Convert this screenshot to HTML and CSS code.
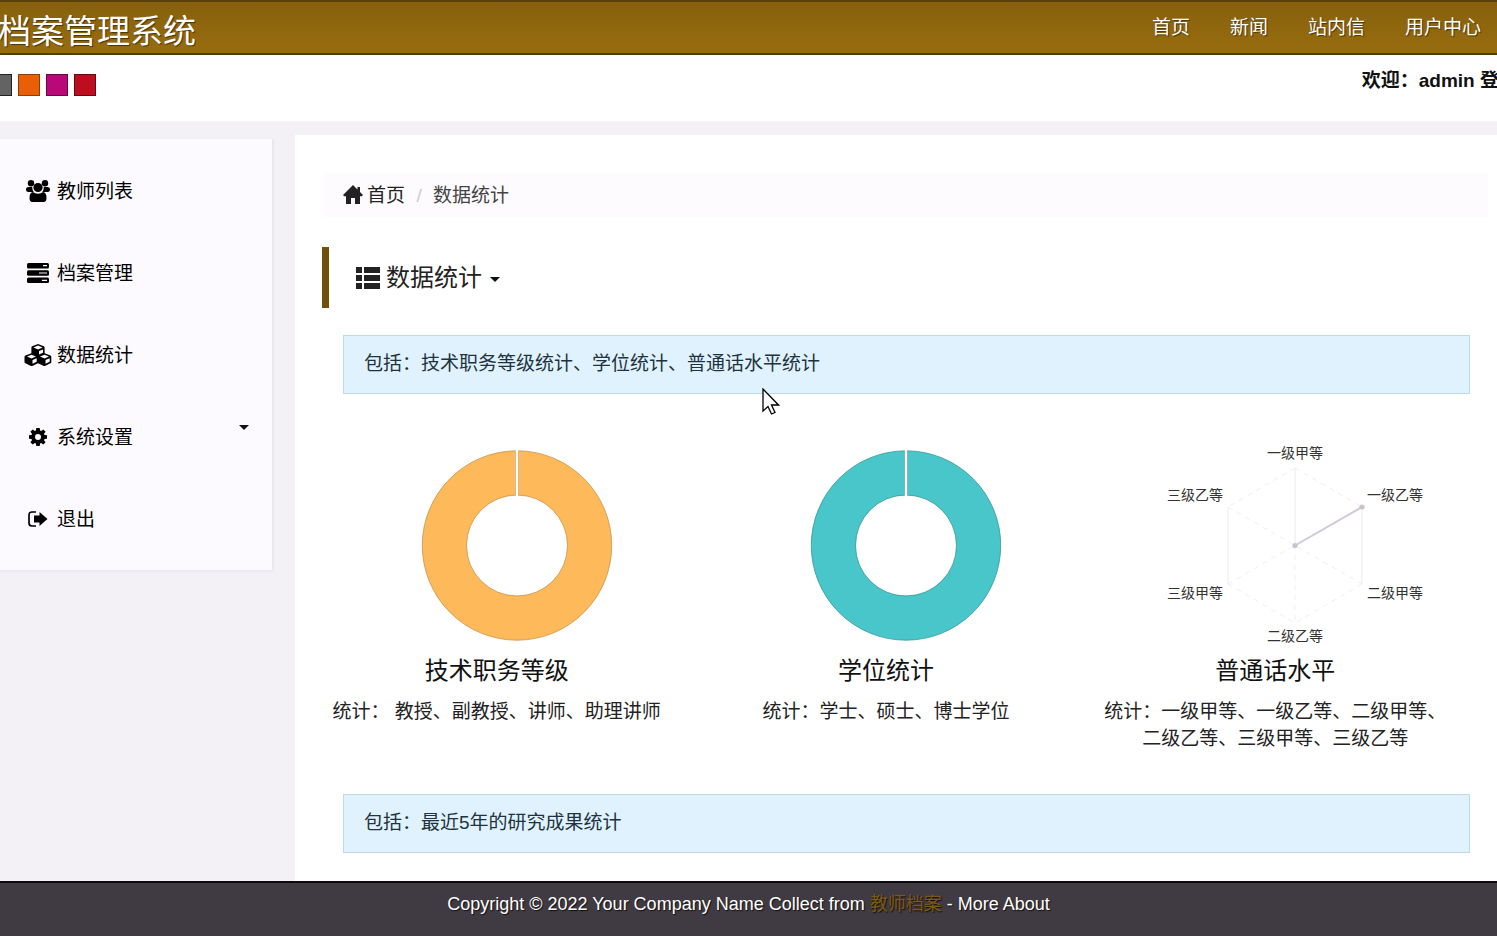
FILE: index.html
```html
<!DOCTYPE html>
<html lang="zh-CN">
<head>
<meta charset="utf-8">
<title>档案管理系统</title>
<link rel="stylesheet" href="styles.css">
</head>
<body>
<header class="topbar">
  <a class="brand" href="#">档案管理系统</a>
  <nav class="topnav">
    <a href="#">首页</a>
    <a href="#">新闻</a>
    <a href="#">站内信</a>
    <a href="#">用户中心</a>
  </nav>
</header>
<div class="subbar">
  <div class="themes">
    <button class="theme theme-gray" type="button" aria-label="灰色"></button>
    <button class="theme theme-orange" type="button" aria-label="橙色"></button>
    <button class="theme theme-magenta" type="button" aria-label="紫红"></button>
    <button class="theme theme-red" type="button" aria-label="红色"></button>
  </div>
  <div class="welcome">欢迎：admin 登</div>
</div>
<div class="layout">
  <nav class="sidebar">
    <a href="#"><span class="icon"><svg width="24" height="22" viewBox="0 0 24 22"><circle cx="12" cy="7.500" r="4.600"/><circle cx="5" cy="3.200" r="3.200"/><circle cx="19" cy="3.200" r="3.200"/><path d="M2.500 7h3.700q0 3.200 1.500 5H2.500Q0 12 0 9.800 0 7 2.500 7zM21.500 7h-3.700q0 3.200-1.500 5h5.200q2.500 0 2.500-2.200Q24 7 21.500 7zM7 12q2 1.800 5 1.800T17 12q3.500.500 3.500 6 0 4-3 4h-11q-3 0-3-4 0-5.500 3.500-6z"/></svg></span>教师列表</a>
    <a href="#"><span class="icon"><svg width="22" height="20" viewBox="0 0 22 20"><rect width="22" height="5.600" rx="1.500"/><rect y="7.200" width="22" height="5.600" rx="1.500"/><rect y="14.400" width="22" height="5.600" rx="1.500"/><path d="M16 2.700h4M12 10h8M15 17.300h5" stroke="#fcfaff" stroke-width="1.200"/></svg></span>档案管理</a>
    <a href="#"><span class="icon"><svg width="28" height="22" viewBox="0 0 28 22"><path d="M14 0l5.800 2.300q.8.400.8 1.300v5.600l5.800 2.300q.9.400.9 1.400v5q0 .9-.9 1.300L21 21.900q-.6.200-1.200 0L14 19.200l-5.800 2.700q-.6.200-1.200 0L1.400 19.200q-.9-.4-.9-1.300v-5q0-1 .9-1.400l6-2.300V3.600q0-.9.800-1.300z"/><path d="M14 1.600l4.600 1.900L14 5.400 9.400 3.500zM15 7l4-1.600v3.400L15 10.600zM7.500 10.700l4.500 1.900-4.500 1.900L3 12.600zM8.500 16l4.200-1.800v3.500l-4.200 2zM20.500 10.700l4.500 1.900-4.500 1.900-4.500-1.900zM21.500 16l4.200-1.800v3.500l-4.200 2z" fill="#fcfaff"/></svg></span>数据统计</a>
    <a href="#"><span class="icon"><svg width="18" height="18" viewBox="0 0 18 18"><path d="M7.300 0h3.400l.4 2.500 1.100.5L14.300 1.400l2.300 2.300L15 5.800l.5 1.100 2.500.4v3.400l-2.500.4-.5 1.100 1.600 2.100-2.300 2.300-2.100-1.600-1.100.5-.4 2.500H7.300l-.4-2.500-1.100-.5-2.100 1.600-2.300-2.300L3 12.200l-.5-1.100L0 10.700V7.300l2.500-.4L3 5.800 1.400 3.700l2.300-2.300L5.800 3l1.100-.5zM9 6a3 3 0 100 6 3 3 0 000-6z" fill-rule="evenodd"/></svg></span>系统设置<i class="caret"></i></a>
    <a href="#"><span class="icon"><svg width="20" height="16" viewBox="0 0 20 16"><path d="M8 1H4Q1 1 1 4v8q0 3 3 3h4" fill="none" stroke="#000" stroke-width="1.700"/><path d="M6 4.500h5.500V1L19.500 8l-8 7v-3.500H6z"/></svg></span>退出</a>
  </nav>
  <main class="content">
    <nav class="breadcrumb">
      <a href="#"><svg width="20" height="20" viewBox="0 0 20 20"><path d="M10 0l4.500 4.500V2H17v5l3 3-1.200 1.200H17V19h-5v-6H8v6H3v-7.800H1.200L0 10z" fill="#222"/></svg>首页</a>
      <span class="slash">/</span>
      <span class="current">数据统计</span>
    </nav>
    <h2 class="section-title">
      <svg width="24" height="22" viewBox="0 0 24 22" fill="#222"><path d="M0 0h6v6H0zM8 0h16v6H8zM0 8h6v6H0zM8 8h16v6H8zM0 16h6v6H0zM8 16h16v6H8z"/></svg>数据统计<i class="caret"></i>
    </h2>
    <div class="alert">包括：技术职务等级统计、学位统计、普通话水平统计</div>
    <div class="charts">
      <section class="chart">
        <svg class="plot" width="270" height="210" viewBox="0 0 270 210"><circle cx="135" cy="105.500" r="72.500" fill="none" stroke="#fdb95a" stroke-width="44.500"/><g fill="none" stroke="#c9954d" stroke-width=".8"><circle cx="135" cy="105.500" r="94.700"/><circle cx="135" cy="105.500" r="50.500"/></g><path d="M135 10.500v45" stroke="#c08a45" stroke-width="4"/><path d="M135 9v48" stroke="#fff" stroke-width="2.800"/></svg>
        <h3>技术职务等级</h3>
        <p>统计： 教授、副教授、讲师、助理讲师</p>
      </section>
      <section class="chart">
        <svg class="plot" width="270" height="210" viewBox="0 0 270 210"><circle cx="135" cy="105.500" r="72.500" fill="none" stroke="#49c6ca" stroke-width="44.500"/><g fill="none" stroke="#36989b" stroke-width=".8"><circle cx="135" cy="105.500" r="94.700"/><circle cx="135" cy="105.500" r="50.500"/></g><path d="M135 10.500v45" stroke="#2d8688" stroke-width="4"/><path d="M135 9v48" stroke="#fff" stroke-width="2.800"/></svg>
        <h3>学位统计</h3>
        <p>统计：学士、硕士、博士学位</p>
      </section>
      <section class="chart">
        <svg class="plot radar" width="270" height="210" viewBox="0 0 270 210">
          <path d="M135 28v77M68 67v77M202 67v77" stroke="#f1e8f3" fill="none"/>
          <path d="M135 28l67 39M135 28L68 67M68 144l67 39 67-39M68 67l134 77M68 144l67-39M135 105v78" stroke="#f0edf2" stroke-dasharray="5 5" fill="none"/>
          <path d="M135 105.500L202 67" stroke="#d3c8d8" stroke-width="2"/>
          <g fill="#c9c3cd"><circle cx="135" cy="105.500" r="2.600"/><circle cx="202" cy="67" r="2.600"/></g>
          <text x="135" y="18" text-anchor="middle">一级甲等</text>
          <text x="207" y="60">一级乙等</text>
          <text x="207" y="158">二级甲等</text>
          <text x="135" y="201" text-anchor="middle">二级乙等</text>
          <text x="63" y="158" text-anchor="end">三级甲等</text>
          <text x="63" y="60" text-anchor="end">三级乙等</text>
        </svg>
        <h3>普通话水平</h3>
        <p>统计：一级甲等、一级乙等、二级甲等、<br>二级乙等、三级甲等、三级乙等</p>
      </section>
    </div>
    <div class="alert">包括：最近5年的研究成果统计</div>
  </main>
</div>
<footer class="footer">Copyright © 2022 Your Company Name Collect from <a class="gold" href="#">教师档案</a> - <a href="#">More About</a></footer>
<svg class="cursor" width="18" height="28" viewBox="0 0 18 28"><path d="M1 1v22l5-4.500 3.500 7.500 3.500-1.500L9.500 17H16.500z" fill="#fff" stroke="#000" stroke-width="1.300"/></svg>
</body>
</html>
```
FILE: styles.css
```css
* { box-sizing: border-box; }
body {
  margin: 0;
  min-height: 100vh;
  display: flex;
  flex-direction: column;
  position: relative;
  overflow-x: hidden;
  background: #f3f0f6;
  color: #222;
  font: 19px/27px "Liberation Sans", "Noto Sans CJK SC", sans-serif;
}
a { color: inherit; text-decoration: none; }
h2, h3, p { margin: 0; font-weight: 400; }
svg { flex: none; }

.topbar {
  height: 55px;
  padding-right: 16px;
  display: flex;
  justify-content: space-between;
  align-items: center;
  color: #fff;
  background: linear-gradient(#86600d, #986d0e);
  border-top: 2px solid #594109;
  border-bottom: 2px solid #553d08;
  text-shadow: 1px 1px 1px #4a3405;
}
.brand { font-size: 33px; line-height: 42px; padding-top: 9px; margin-left: -2px; }
.topnav { display: flex; gap: 40px; }

.subbar {
  height: 67px;
  display: flex;
  justify-content: space-between;
  background: #fff;
  border-bottom: 1px solid #f6f4f8;
}
.themes { display: flex; gap: 6px; padding-top: 19px; margin-left: -10px; }
.theme { width: 22px; height: 22px; padding: 0; border: 1px solid; }
.theme-gray { background: #636363; border-color: #222; }
.theme-orange { background: #e85f05; border-color: #8d3d08; }
.theme-magenta { background: #b90877; border-color: #6b0647; }
.theme-red { background: #bd0e20; border-color: #6b0712; }
.welcome { padding-top: 12px; margin-right: -2px; font-weight: 700; color: #111; white-space: nowrap; }

.layout {
  flex: 1;
  display: grid;
  grid-template-columns: 273px minmax(0, 1fr);
  column-gap: 22px;
  padding-top: 13px;
}
.sidebar {
  align-self: start;
  margin-top: 4px;
  padding: 11px 0 10px;
  background: #fcfaff;
  border-right: 1px solid #e9e5ed;
  box-shadow: 0 1px 3px #e6e2ea;
  color: #000;
}
.sidebar a { display: flex; align-items: center; height: 82px; padding: 0 23px 0 24px; }
.icon { width: 28px; margin-right: 5px; display: flex; justify-content: center; }
.caret {
  border: 5px solid transparent;
  border-top-color: #111;
  border-bottom: 0;
}
.sidebar .caret { margin: 0 0 20px auto; }

.content { background: #fff; padding: 38px 27px 28px 28px; }
.breadcrumb {
  height: 44px;
  margin-right: -18px;
  padding: 0 20px;
  display: flex;
  align-items: center;
  background: #fdfbfe;
}
.breadcrumb a { display: flex; align-items: center; gap: 4px; }
.slash { width: 28px; text-align: center; color: #ccc; }
.current { color: #444; }
.section-title {
  height: 61px;
  margin: 30px 0 27px -1px;
  padding-left: 27px;
  display: flex;
  align-items: center;
  font-size: 24px;
  line-height: 34px;
  border-left: 7px solid #70500a;
}
.section-title svg { margin-right: 6px; }
.section-title .caret { margin: 4px 0 0 8px; }
.alert {
  margin-left: 20px;
  padding: 14px 20px 16px;
  color: #1d3340;
  background: #e0f2fe;
  border: 1px solid #b9dcec;
}
.charts {
  display: grid;
  grid-template-columns: repeat(3, 1fr);
  margin: 46px 0 42px -21px;
}
.chart { display: flex; flex-direction: column; align-items: center; text-align: center; }
.plot { margin-left: 40px; }
.radar text { font-size: 14px; fill: #333; }
.chart h3 { font-size: 24px; line-height: 34px; margin: 4px 0 10px; color: #111; }
.chart p { white-space: nowrap; }

.footer {
  height: 55px;
  padding-top: 8px;
  text-align: center;
  font-size: 18px;
  color: #fff;
  background: #403a42;
  border-top: 2px solid #0c090e;
  text-shadow: 1px 1px 1px #111;
}
.gold { color: #7d5a12; }
.cursor { position: absolute; left: 762px; top: 388px; pointer-events: none; }
```
